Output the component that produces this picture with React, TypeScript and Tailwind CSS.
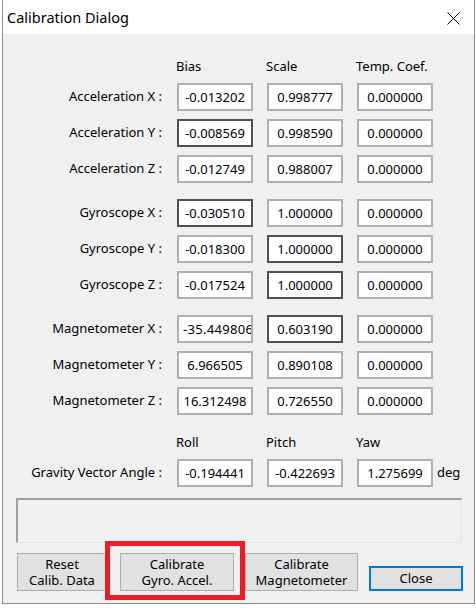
import React from 'react';

type Cell = { v: string; dark?: boolean; clip?: boolean };

const FONT = { fontFamily: '"Noto Sans", "Open Sans", Arial, sans-serif' };

const groups: { label: string; cells: Cell[] }[][] = [
  [
    { label: 'Acceleration X :', cells: [{ v: '-0.013202' }, { v: '0.998777' }, { v: '0.000000' }] },
    { label: 'Acceleration Y :', cells: [{ v: '-0.008569', dark: true }, { v: '0.998590' }, { v: '0.000000' }] },
    { label: 'Acceleration Z :', cells: [{ v: '-0.012749' }, { v: '0.988007' }, { v: '0.000000' }] },
  ],
  [
    { label: 'Gyroscope X :', cells: [{ v: '-0.030510', dark: true }, { v: '1.000000' }, { v: '0.000000' }] },
    { label: 'Gyroscope Y :', cells: [{ v: '-0.018300' }, { v: '1.000000', dark: true }, { v: '0.000000' }] },
    { label: 'Gyroscope Z :', cells: [{ v: '-0.017524' }, { v: '1.000000', dark: true }, { v: '0.000000' }] },
  ],
  [
    { label: 'Magnetometer X :', cells: [{ v: '-35.449806', clip: true }, { v: '0.603190', dark: true }, { v: '0.000000' }] },
    { label: 'Magnetometer Y :', cells: [{ v: '6.966505' }, { v: '0.890108' }, { v: '0.000000' }] },
    { label: 'Magnetometer Z :', cells: [{ v: '16.312498' }, { v: '0.726550' }, { v: '0.000000' }] },
  ],
];

function Field({ v, dark, clip }: Cell) {
  return (
    <div
      className={`w-[76px] h-[28px] bg-white border-2 overflow-hidden whitespace-nowrap leading-[24px] text-[13px] text-black ${
        dark ? 'border-[#505050]' : 'border-[#b0b0b0]'
      } ${clip ? 'text-left pl-[4px] tracking-[0.3px]' : 'text-center px-[4px]'}`}
    >
      {v}
    </div>
  );
}

function Row({ label, cells, suffix }: { label: string; cells: Cell[]; suffix?: string }) {
  return (
    <div className="flex items-center h-[28px]">
      <div className="w-[160px] text-right text-[13px] text-black pr-[1px]">{label}</div>
      <div className="ml-[14px] flex gap-[14px]">
        {cells.map((c, i) => (
          <Field key={i} {...c} />
        ))}
      </div>
      {suffix && <span className="ml-[4px] text-[13px] text-black">{suffix}</span>}
    </div>
  );
}

function Headers({ names }: { names: string[] }) {
  return (
    <div className="flex h-[16px] items-center text-[13px] text-black">
      <div className="w-[160px]" />
      <div className="ml-[13px] flex gap-[14px]">
        {names.map((n) => (
          <div key={n} className="w-[76px]">{n}</div>
        ))}
      </div>
    </div>
  );
}

function Btn({ lines, className }: { lines: string[]; className: string }) {
  return (
    <div
      className={`h-[38px] bg-[#e1e1e1] border border-[#adadad] flex flex-col items-center justify-center text-[13px] leading-[16px] text-black ${className}`}
    >
      {lines.map((l) => (
        <span key={l}>{l}</span>
      ))}
    </div>
  );
}

export default function App() {
  return (
    <div className="w-[476px] h-[610px] bg-white pl-[2px]" style={FONT}>
      <div className="w-[473px] h-[604px] border-x border-b border-[#8c8c8c] flex flex-col">
        {/* Title bar */}
        <div className="h-[34px] bg-white flex items-center justify-between pl-[4px] pr-[14px]">
          <span className="text-[14.5px] text-black mt-[1px]">Calibration Dialog</span>
          <svg width="13" height="13" viewBox="0 0 13 13" className="mt-[2px]">
            <path d="M0.5 0.5L12.5 12.5M12.5 0.5L0.5 12.5" stroke="#000" strokeWidth="1" />
          </svg>
        </div>

        {/* Body */}
        <div className="flex-1 bg-[#f0f0f0] pt-[25px]">
          <Headers names={['Bias', 'Scale', 'Temp. Coef.']} />
          <div className="mt-[8px] flex flex-col gap-[16px]">
            {groups.map((g, gi) => (
              <div key={gi} className="flex flex-col gap-[8px]">
                {g.map((r) => (
                  <Row key={r.label} label={r.label} cells={r.cells} />
                ))}
              </div>
            ))}
          </div>

          <div className="mt-[20px]">
            <Headers names={['Roll', 'Pitch', 'Yaw']} />
          </div>
          <div className="mt-[8px]">
            <Row
              label="Gravity Vector Angle :"
              cells={[{ v: '-0.194441' }, { v: '-0.422693' }, { v: '1.275699' }]}
              suffix="deg"
            />
          </div>

          {/* Status box */}
          <div className="mt-[11px] ml-[13px] w-[446px] h-[45px] border-t-2 border-l-2 border-[#a0a0a0] border-b border-r border-b-[#e3e3e3] border-r-[#e3e3e3] bg-[#f0f0f0]" />

          {/* Buttons */}
          <div className="mt-[10px] ml-[14px] flex items-end">
            <Btn lines={['Reset', 'Calib. Data']} className="w-[90px]" />
            <div className="relative ml-[13px]">
              <Btn lines={['Calibrate', 'Gyro. Accel.']} className="w-[114px]" />
              <div className="absolute left-[-15px] top-[-12px] w-[140px] h-[59px] border-[5px] border-[#ed1c24] pointer-events-none" />
            </div>
            <Btn lines={['Calibrate', 'Magnetometer']} className="ml-[11px] w-[113px]" />
            <div className="ml-[11px] w-[94px] h-[25px] bg-[#e1e1e1] border-2 border-[#0078d7] flex items-center justify-center text-[13px] text-black">
              Close
            </div>
          </div>
        </div>
      </div>
    </div>
  );
}
